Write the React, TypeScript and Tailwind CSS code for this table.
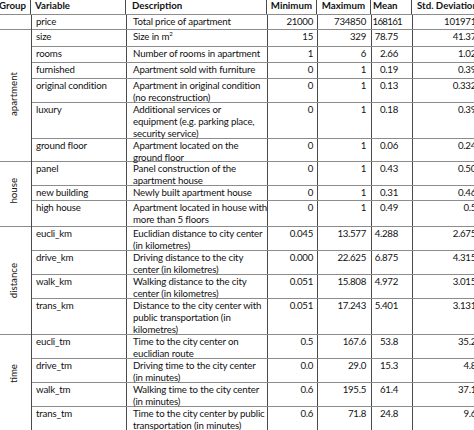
import React from "react";

type Row = {
  v: string;
  d: React.ReactNode[];
  min: string;
  max: string;
  mean: string;
  sd: string;
  h: string;
  meanCls?: string;
};

const rows: Row[] = [
  { v: "price", d: ["Total price of apartment"], min: "21000", max: "734850", mean: "168161", sd: "101971", h: "h-[15px]", meanCls: "pr-[10px] tracking-[-0.7px]" },
  { v: "size", d: [<span key="s">Size in m<sup className="text-[6px] relative top-[1px] align-top leading-none">2</sup></span>], min: "15", max: "329", mean: "78.75", sd: "41.37", h: "h-[17px]" },
  { v: "rooms", d: ["Number of rooms in apartment"], min: "1", max: "6", mean: "2.66", sd: "1.02", h: "h-[16px]" },
  { v: "furnished", d: ["Apartment sold with furniture"], min: "0", max: "1", mean: "0.19", sd: "0.39", h: "h-[16px]" },
  { v: "original condition", d: ["Apartment in original condition", "(no reconstruction)"], min: "0", max: "1", mean: "0.13", sd: "0.332", h: "h-[24px]" },
  { v: "luxury", d: ["Additional services or", "equipment (e.g. parking place,", "security service)"], min: "0", max: "1", mean: "0.18", sd: "0.39", h: "h-[36px]" },
  { v: "ground floor", d: ["Apartment located on the", "ground floor"], min: "0", max: "1", mean: "0.06", sd: "0.24", h: "h-[23px]" },
  { v: "panel", d: ["Panel construction of the", "apartment house"], min: "0", max: "1", mean: "0.43", sd: "0.50", h: "h-[24px]" },
  { v: "new building", d: ["Newly built apartment house"], min: "0", max: "1", mean: "0.31", sd: "0.46", h: "h-[15px]" },
  { v: "high house", d: ["Apartment located in house with", "more than 5 floors"], min: "0", max: "1", mean: "0.49", sd: "0.5", h: "h-[26px]" },
  { v: "eucli_km", d: ["Euclidian distance to city center", "(in kilometres)"], min: "0.045", max: "13.577", mean: "4.288", sd: "2.675", h: "h-[24px]" },
  { v: "drive_km", d: ["Driving distance to the city", "center (in kilometres)"], min: "0.000", max: "22.625", mean: "6.875", sd: "4.315", h: "h-[24px]" },
  { v: "walk_km", d: ["Walking distance to the city", "center (in kilometres)"], min: "0.051", max: "15.808", mean: "4.972", sd: "3.015", h: "h-[24px]" },
  { v: "trans_km", d: ["Distance to the city center with", "public transportation (in", "kilometres)"], min: "0.051", max: "17.243", mean: "5.401", sd: "3.131", h: "h-[36px]" },
  { v: "eucli_tm", d: ["Time to the city center on", "euclidian route"], min: "0.5", max: "167.6", mean: "53.8", sd: "35.2", h: "h-[24px]" },
  { v: "drive_tm", d: ["Driving time to the city center", "(in minutes)"], min: "0.0", max: "29.0", mean: "15.3", sd: "4.8", h: "h-[24px]" },
  { v: "walk_tm", d: ["Walking time to the city center", "(in minutes)"], min: "0.6", max: "195.5", mean: "61.4", sd: "37.1", h: "h-[24px]" },
  { v: "trans_tm", d: ["Time to the city center by public", "transportation (in minutes)"], min: "0.6", max: "71.8", mean: "24.8", sd: "9.6", h: "h-[26px]" },
];

const VB = "border-r border-[#4a4a4a]";
const HB = "border-b border-[#8c8c8c]";

function GroupBlock({ label, h, extra }: { label: string; h: string; extra?: string }) {
  return (
    <div className={`${h} ${HB} flex items-center justify-center pr-[5px] ${extra ?? ""}`}>
      <span className="[writing-mode:vertical-rl] rotate-180 leading-[12px]">{label}</span>
    </div>
  );
}

export default function App() {
  return (
    <div
      className="w-[474px] h-[430px] overflow-hidden bg-white text-[#111111] text-[9.7px] leading-[12px]"
      style={{ fontFamily: "Lato, 'Open Sans', sans-serif" }}
    >
      <div className="w-[480px]">
        {/* header */}
        <div className={`flex h-[15px] ${HB} font-bold`}>
          <div className={`w-[32px] shrink-0 ${VB} -mt-[1px] -ml-[1px] pr-[1px]`}>Group</div>
          <div className={`w-[95px] shrink-0 ${VB} pl-[4px] -mt-[1px]`}>Variable</div>
          <div className={`w-[141px] shrink-0 ${VB} pl-[6px] -mt-[1px]`}>Description</div>
          <div className={`w-[50px] shrink-0 ${VB} flex justify-end pr-[4px] -mt-[1px]`}>
            <span className="whitespace-nowrap">Minimum</span>
          </div>
          <div className={`w-[54px] shrink-0 ${VB} flex justify-end pr-[5px] -mt-[1px]`}>
            <span className="whitespace-nowrap">Maximum</span>
          </div>
          <div className={`w-[41px] shrink-0 ${VB} pl-[2px] -mt-[1px]`}>Mean</div>
          <div className="w-[70px] shrink-0 pl-[5px] whitespace-nowrap -mt-[1px]">Std. Deviation</div>
        </div>
        {/* body */}
        <div className="flex">
          <div className={`w-[32px] shrink-0 ${VB} flex flex-col`}>
            <div className={`h-[15px] ${HB}`} />
            <GroupBlock label="apartment" h="h-[132px]" extra="pb-[3px]" />
            <GroupBlock label="house" h="h-[65px]" extra="pb-[6px]" />
            <GroupBlock label="distance" h="h-[108px]" />
            <GroupBlock label="time" h="h-[100px]" extra="pb-[22px]" />
          </div>
          <div className="flex flex-col">
            {rows.map((r) => (
              <div key={r.v} className={`flex ${r.h} ${HB}`}>
                <div className={`w-[95px] shrink-0 ${VB} pl-[4px] whitespace-nowrap tracking-[-0.15px]`}>{r.v}</div>
                <div className={`w-[141px] shrink-0 ${VB} pl-[6px] whitespace-nowrap tracking-[-0.15px]`}>
                  {r.d.map((line, i) => (
                    <div key={i}>{line}</div>
                  ))}
                </div>
                <div className={`w-[50px] shrink-0 ${VB} text-right pr-[4px] tracking-[-0.3px]`}>{r.min}</div>
                <div className={`w-[54px] shrink-0 ${VB} text-right pr-[5px] tracking-[-0.3px]`}>{r.max}</div>
                <div className={`w-[41px] shrink-0 ${VB} flex justify-end ${r.meanCls ?? "pr-[14px] tracking-[-0.3px]"}`}>
                  <span className="whitespace-nowrap">{r.mean}</span>
                </div>
                <div className="w-[63px] shrink-0 text-right tracking-[-0.3px]">{r.sd}</div>
              </div>
            ))}
          </div>
        </div>
      </div>
    </div>
  );
}
